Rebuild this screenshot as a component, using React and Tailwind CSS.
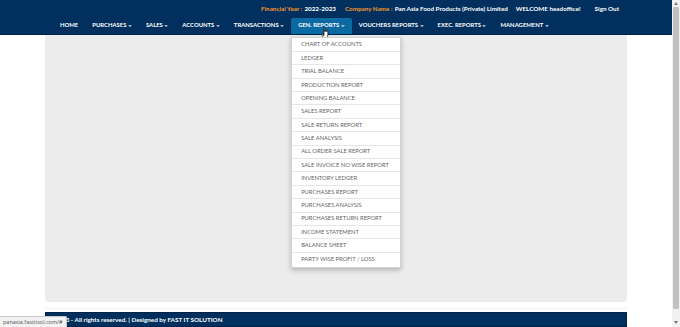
import React from 'react';

const NAV = [
  { label: 'HOME' },
  { label: 'PURCHASES', caret: true },
  { label: 'SALES', caret: true },
  { label: 'ACCOUNTS', caret: true },
  { label: 'TRANSACTIONS', caret: true },
  { label: 'GEN. REPORTS', caret: true, active: true },
  { label: 'VOUCHERS REPORTS', caret: true },
  { label: 'EXEC. REPORTS', caret: true },
  { label: 'MANAGEMENT', caret: true },
];

const REPORTS = [
  'CHART OF ACCOUNTS',
  'LEDGER',
  'TRIAL BALANCE',
  'PRODUCTION REPORT',
  'OPENING BALANCE',
  'SALES REPORT',
  'SALE RETURN REPORT',
  'SALE ANALYSIS',
  'ALL ORDER SALE REPORT',
  'SALE INVOICE NO WISE REPORT',
  'INVENTORY LEDGER',
  'PURCHASES REPORT',
  'PURCHASES ANALYSIS',
  'PURCHASES RETURN REPORT',
  'INCOME STATEMENT',
  'BALANCE SHEET',
  'PARTY WISE PROFIT / LOSS',
];

function Caret() {
  return (
    <svg width="4" height="2.5" viewBox="0 0 4 2.5" className="ml-[1.5px] opacity-60">
      <path d="M0 0h4L2 2.5z" fill="currentColor" />
    </svg>
  );
}

// курсор-рука над активным пунктом
function HandCursor() {
  return (
    <svg width="10" height="13" viewBox="0 0 10 13" className="absolute left-[30px] top-[8px]">
      <path
        d="M3 1.2c0-.6.9-.6.9 0v4.3l.1-1c0-.6.9-.6.9 0v1l.1-.6c0-.6.9-.6.9 0v.8l.1-.4c0-.6.9-.6.9 0v3.4c0 1.3-.8 2.6-1.2 3.2H2.8C2.2 11.2.9 9.6.6 8.6c-.2-.6.5-.9.9-.4L3 9.6z"
        fill="#fff"
        stroke="#000"
        strokeWidth="0.7"
        strokeLinejoin="round"
      />
    </svg>
  );
}

export default function App() {
  return (
    <div className="relative w-[680px] h-[327px] overflow-hidden bg-white flex font-['Lato',sans-serif]">
      <div className="w-[672px] flex flex-col">
        {/* шапка */}
        <div className="h-[35px] bg-[#01305e] border-b border-[#00234a] flex flex-col">
          <div className="w-[582px] mx-auto flex justify-end items-center h-[17px] pr-2 text-[6.3px] font-bold text-white">
            <span className="text-[#f0962d]">Financial Year :</span>
            <span className="ml-[2px]">2022-2023</span>
            <span className="ml-[9px] text-[#f0962d]">Company Name :</span>
            <span className="ml-[2px]">Pan Asia Food Products (Private) Limited</span>
            <span className="ml-[8px]">WELCOME headoffice!</span>
            <span className="ml-[14px]">Sign Out</span>
          </div>
          <div className="w-[582px] mx-auto flex items-stretch h-[17px] pl-[8px] mt-[1px] text-[5.9px] font-bold text-white">
            {NAV.map((n) => (
              <div
                key={n.label}
                className={
                  'relative flex items-center px-[7px] ' +
                  (n.active ? 'bg-[#0b6aa2] rounded-t-[2px]' : '')
                }
              >
                <span>{n.label}</span>
                {n.caret && <Caret />}
                {n.active && (
                  <>
                    <HandCursor />
                    <div className="absolute left-0 top-[19px] w-[110px] bg-white border border-[#d4d4d4] shadow-[0_2px_5px_rgba(0,0,0,0.25)] py-[1px] z-10">
                      {REPORTS.map((r, i) => (
                        <div
                          key={r}
                          className={
                            'h-[13.4px] flex items-center pl-[9px] text-[5.8px] font-normal text-[#666] ' +
                            (i < REPORTS.length - 1 ? 'border-b border-[#e6e6e6]' : '')
                          }
                        >
                          {r}
                        </div>
                      ))}
                    </div>
                  </>
                )}
              </div>
            ))}
          </div>
        </div>

        {/* содержимое */}
        <div className="w-[582px] mx-auto h-[267px] bg-[#ececec] rounded-b-[4px]" />
        <div className="w-[582px] mx-auto mt-[6px] border-t border-[#f2f2f2]" />
        <div className="w-[582px] mx-auto mt-[3px] h-[15px] bg-[#01305e] border border-[#00234a] flex items-center pl-[2px] text-[6.3px] font-bold text-white">
          © 2023 - All rights reserved. | Designed by FAST IT SOLUTION
        </div>
      </div>

      {/* полоса прокрутки */}
      <div className="w-[8px] bg-[#f1f1f1] flex flex-col items-center">
        <div className="h-[7px] flex items-center justify-center">
          <svg width="4" height="3" viewBox="0 0 4 3"><path d="M0 3L2 0l2 3z" fill="#777" /></svg>
        </div>
        <div className="w-[6px] h-[302px] bg-[#c1c1c1] rounded-[1px]" />
        <div className="flex-1 flex items-end justify-center pb-[3px]">
          <svg width="4" height="3" viewBox="0 0 4 3"><path d="M0 0h4L2 3z" fill="#777" /></svg>
        </div>
      </div>

      {/* строка статуса браузера */}
      <div className="absolute left-0 bottom-0 h-[11px] px-[3px] bg-[#f2f2f2] border-t border-r border-[#c8c8c8] rounded-tr-[2px] flex items-center text-[5.5px] text-[#555] font-['Open_Sans',sans-serif]">
        panasia.fastitsol.com/#
      </div>
    </div>
  );
}
